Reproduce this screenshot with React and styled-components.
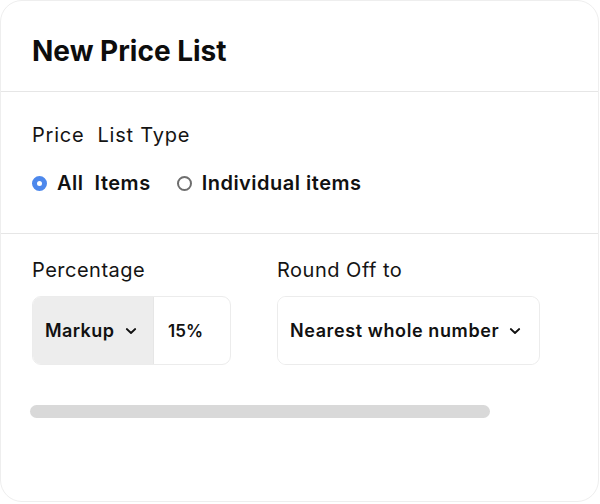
import React from "react";
import styled, { createGlobalStyle } from "styled-components";

const Global = createGlobalStyle`
  html, body { margin: 0; padding: 0; background: #ffffff; }
  body { font-family: Inter, "Noto Sans", sans-serif; color: #111; }
  * { box-sizing: border-box; }
`;

const Card = styled.div`
  width: 599px;
  height: 502px;
  border: 1px solid #eeeeee;
  border-radius: 22px;
  background: #fff;
  display: flex;
  flex-direction: column;
  overflow: hidden;
`;

const Header = styled.div`
  height: 91px;
  border-bottom: 1px solid #e6e6e6;
  display: flex;
  align-items: center;
  padding: 9px 31px 0;
`;

const Title = styled.h1`
  margin: 0;
  font-size: 28px;
  font-weight: 700;
  letter-spacing: 0;
  color: #0d0d0d;
`;

const Section = styled.div`
  border-bottom: ${(p) => (p.$divider ? "1px solid #e6e6e6" : "none")};
  padding: ${(p) => p.$pad};
  display: flex;
  flex-direction: column;
`;

const Label = styled.div`
  font-size: 20px;
  font-weight: 400;
  letter-spacing: ${(p) => p.$ls || "0.5px"};
  color: #141414;
  line-height: 24px;
  white-space: pre;
`;

const RadioRow = styled.div`
  display: flex;
  gap: 26px;
  margin-top: 24px;
`;

const RadioOption = styled.label`
  display: flex;
  align-items: center;
  gap: 10px;
  font-size: 20px;
  font-weight: 600;
  letter-spacing: 0.5px;
  line-height: 24px;
  white-space: pre;
  color: #111;
`;

const RadioDot = styled.span`
  width: 15px;
  height: 15px;
  border-radius: 50%;
  border: ${(p) => (p.$checked ? "5px solid #4d88ec" : "2px solid #6e6e6e")};
  background: #fff;
`;

const FieldsRow = styled.div`
  display: flex;
  gap: 46px;
`;

const Field = styled.div`
  display: flex;
  flex-direction: column;
  gap: 14px;
`;

const InputGroup = styled.div`
  display: flex;
  width: ${(p) => p.$w}px;
  height: 69px;
  border: 1px solid #ececec;
  border-radius: 9px;
  overflow: hidden;
`;

const Select = styled.div`
  display: flex;
  align-items: center;
  gap: ${(p) => (p.$grey ? "11px" : "10px")};
  padding: 0 12px;
  background: ${(p) => (p.$grey ? "#ededed" : "#fff")};
  width: ${(p) => (p.$w ? `${p.$w}px` : "auto")};
  font-size: 18px;
  font-weight: 600;
  letter-spacing: ${(p) => (p.$grey ? "0.4px" : "0.6px")};
  color: #111;
  border-right: ${(p) => (p.$grey ? "1px solid #e6e6e6" : "none")};
`;

const Value = styled.div`
  display: flex;
  align-items: center;
  padding: 0 14px;
  font-size: 17px;
  font-weight: 600;
  color: #111;
`;

const Bar = styled.div`
  width: 460px;
  height: 13px;
  border-radius: 7px;
  background: #d9d9d9;
  margin-top: 40px;
  margin-left: -2px;
`;

const Chevron = () => (
  <svg width="12" height="8" viewBox="0 0 12 8" fill="none">
    <path d="M1.8 2L6 6L10.2 2" stroke="#111" strokeWidth="1.8" strokeLinecap="round" strokeLinejoin="round" />
  </svg>
);

export default function App() {
  return (
    <>
      <Global />
      <Card>
        <Header>
          <Title>New Price List</Title>
        </Header>
        <Section $divider $pad="31px 31px 38px">
          <Label $ls="0.8px">{"Price  List Type"}</Label>
          <RadioRow>
            <RadioOption>
              <RadioDot $checked />
              {"All  Items"}
            </RadioOption>
            <RadioOption>
              <RadioDot />
              Individual items
            </RadioOption>
          </RadioRow>
        </Section>
        <Section $pad="24px 31px">
          <FieldsRow>
            <Field>
              <Label>Percentage</Label>
              <InputGroup $w={199}>
                <Select $grey $w={121}>
                  Markup <Chevron />
                </Select>
                <Value>15%</Value>
              </InputGroup>
            </Field>
            <Field>
              <Label>Round Off to</Label>
              <InputGroup $w={263}>
                <Select>
                  Nearest whole number <Chevron />
                </Select>
              </InputGroup>
            </Field>
          </FieldsRow>
          <Bar />
        </Section>
      </Card>
    </>
  );
}
